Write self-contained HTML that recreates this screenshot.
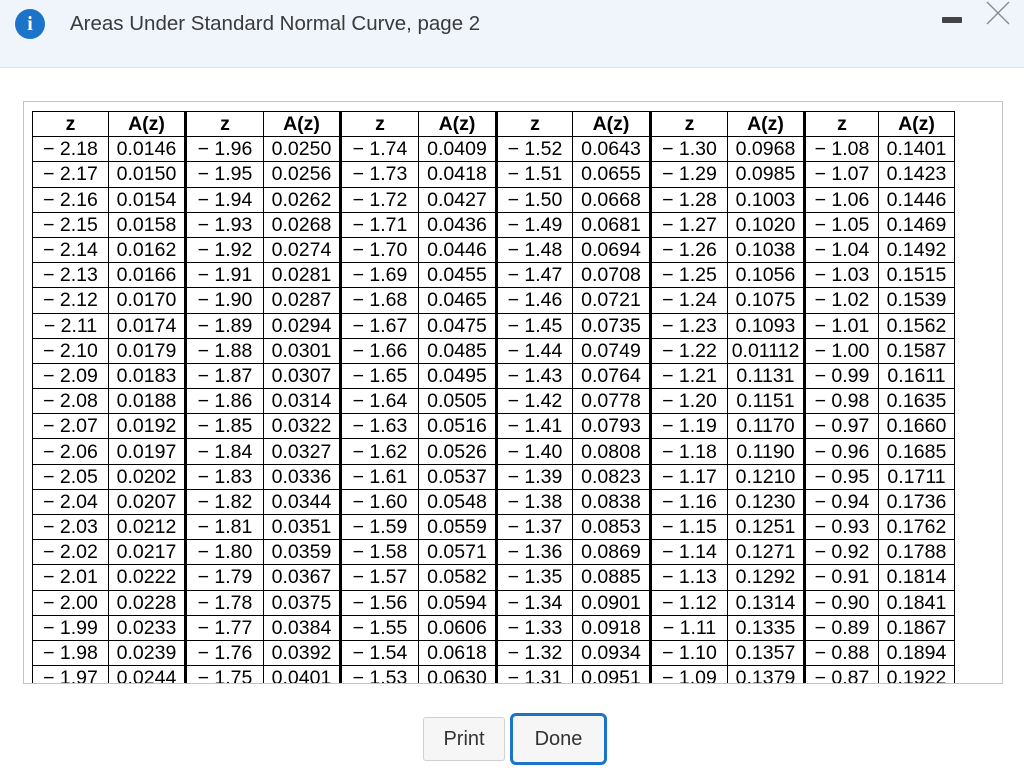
<!DOCTYPE html>
<html><head><meta charset="utf-8"><style>
body{margin:0;width:1024px;height:782px;background:#fff;position:relative;overflow:hidden;font-family:"Liberation Sans",Arial,sans-serif}
.hdr{position:absolute;left:0;top:0;width:1024px;height:67px;background:#f0f5fc;border-bottom:1px solid #d3e4f6}
.title{position:absolute;left:70px;top:12px;font-size:20.5px;color:#3a3a3a}
.info{position:absolute;left:15px;top:9px;width:30px;height:30px;border-radius:50%;background:#1b74c9;color:#fff;font:bold 20px "Liberation Serif",serif;text-align:center;line-height:30px}
.min{position:absolute;left:942px;top:17px;width:20px;height:6px;background:#444;border-radius:1px}
.frame{position:absolute;left:23px;top:101px;width:978px;height:581px;border:1px solid #c4c4c4;overflow:hidden}
table{position:absolute;left:8px;top:9px;border-collapse:collapse;table-layout:fixed;font-size:19.5px;color:#000}
td{border:1px solid #000;height:24.2px;padding:0;text-align:center;line-height:22px;white-space:nowrap;overflow:hidden}
tr:first-child td{font-weight:bold}
td.t{border-left:3px solid #000}
.btn{position:absolute;font-size:19px;color:#333;text-align:center;box-sizing:border-box;background:#f6f6f6}
</style></head><body>
<div class="hdr">
<div class="info">i</div>
<div class="title">Areas Under Standard Normal Curve, page 2</div>
<div class="min"></div>
<svg style="position:absolute;left:986px;top:1px" width="24" height="24"><path d="M1 1L23 23M23 1L1 23" stroke="#888" stroke-width="1.3"/></svg>
</div>
<div class="frame">
<table>
<colgroup><col style="width:76px"><col style="width:77px"><col style="width:78px"><col style="width:77px"><col style="width:78px"><col style="width:78px"><col style="width:76px"><col style="width:78px"><col style="width:77px"><col style="width:77px"><col style="width:74px"><col style="width:76px"></colgroup>
<tr><td>z</td><td>A(z)</td><td class="t">z</td><td>A(z)</td><td class="t">z</td><td>A(z)</td><td class="t">z</td><td>A(z)</td><td class="t">z</td><td>A(z)</td><td class="t">z</td><td>A(z)</td></tr>
<tr><td>− 2.18</td><td>0.0146</td><td class="t">− 1.96</td><td>0.0250</td><td class="t">− 1.74</td><td>0.0409</td><td class="t">− 1.52</td><td>0.0643</td><td class="t">− 1.30</td><td>0.0968</td><td class="t">− 1.08</td><td>0.1401</td></tr>
<tr><td>− 2.17</td><td>0.0150</td><td class="t">− 1.95</td><td>0.0256</td><td class="t">− 1.73</td><td>0.0418</td><td class="t">− 1.51</td><td>0.0655</td><td class="t">− 1.29</td><td>0.0985</td><td class="t">− 1.07</td><td>0.1423</td></tr>
<tr><td>− 2.16</td><td>0.0154</td><td class="t">− 1.94</td><td>0.0262</td><td class="t">− 1.72</td><td>0.0427</td><td class="t">− 1.50</td><td>0.0668</td><td class="t">− 1.28</td><td>0.1003</td><td class="t">− 1.06</td><td>0.1446</td></tr>
<tr><td>− 2.15</td><td>0.0158</td><td class="t">− 1.93</td><td>0.0268</td><td class="t">− 1.71</td><td>0.0436</td><td class="t">− 1.49</td><td>0.0681</td><td class="t">− 1.27</td><td>0.1020</td><td class="t">− 1.05</td><td>0.1469</td></tr>
<tr><td>− 2.14</td><td>0.0162</td><td class="t">− 1.92</td><td>0.0274</td><td class="t">− 1.70</td><td>0.0446</td><td class="t">− 1.48</td><td>0.0694</td><td class="t">− 1.26</td><td>0.1038</td><td class="t">− 1.04</td><td>0.1492</td></tr>
<tr><td>− 2.13</td><td>0.0166</td><td class="t">− 1.91</td><td>0.0281</td><td class="t">− 1.69</td><td>0.0455</td><td class="t">− 1.47</td><td>0.0708</td><td class="t">− 1.25</td><td>0.1056</td><td class="t">− 1.03</td><td>0.1515</td></tr>
<tr><td>− 2.12</td><td>0.0170</td><td class="t">− 1.90</td><td>0.0287</td><td class="t">− 1.68</td><td>0.0465</td><td class="t">− 1.46</td><td>0.0721</td><td class="t">− 1.24</td><td>0.1075</td><td class="t">− 1.02</td><td>0.1539</td></tr>
<tr><td>− 2.11</td><td>0.0174</td><td class="t">− 1.89</td><td>0.0294</td><td class="t">− 1.67</td><td>0.0475</td><td class="t">− 1.45</td><td>0.0735</td><td class="t">− 1.23</td><td>0.1093</td><td class="t">− 1.01</td><td>0.1562</td></tr>
<tr><td>− 2.10</td><td>0.0179</td><td class="t">− 1.88</td><td>0.0301</td><td class="t">− 1.66</td><td>0.0485</td><td class="t">− 1.44</td><td>0.0749</td><td class="t">− 1.22</td><td>0.01112</td><td class="t">− 1.00</td><td>0.1587</td></tr>
<tr><td>− 2.09</td><td>0.0183</td><td class="t">− 1.87</td><td>0.0307</td><td class="t">− 1.65</td><td>0.0495</td><td class="t">− 1.43</td><td>0.0764</td><td class="t">− 1.21</td><td>0.1131</td><td class="t">− 0.99</td><td>0.1611</td></tr>
<tr><td>− 2.08</td><td>0.0188</td><td class="t">− 1.86</td><td>0.0314</td><td class="t">− 1.64</td><td>0.0505</td><td class="t">− 1.42</td><td>0.0778</td><td class="t">− 1.20</td><td>0.1151</td><td class="t">− 0.98</td><td>0.1635</td></tr>
<tr><td>− 2.07</td><td>0.0192</td><td class="t">− 1.85</td><td>0.0322</td><td class="t">− 1.63</td><td>0.0516</td><td class="t">− 1.41</td><td>0.0793</td><td class="t">− 1.19</td><td>0.1170</td><td class="t">− 0.97</td><td>0.1660</td></tr>
<tr><td>− 2.06</td><td>0.0197</td><td class="t">− 1.84</td><td>0.0327</td><td class="t">− 1.62</td><td>0.0526</td><td class="t">− 1.40</td><td>0.0808</td><td class="t">− 1.18</td><td>0.1190</td><td class="t">− 0.96</td><td>0.1685</td></tr>
<tr><td>− 2.05</td><td>0.0202</td><td class="t">− 1.83</td><td>0.0336</td><td class="t">− 1.61</td><td>0.0537</td><td class="t">− 1.39</td><td>0.0823</td><td class="t">− 1.17</td><td>0.1210</td><td class="t">− 0.95</td><td>0.1711</td></tr>
<tr><td>− 2.04</td><td>0.0207</td><td class="t">− 1.82</td><td>0.0344</td><td class="t">− 1.60</td><td>0.0548</td><td class="t">− 1.38</td><td>0.0838</td><td class="t">− 1.16</td><td>0.1230</td><td class="t">− 0.94</td><td>0.1736</td></tr>
<tr><td>− 2.03</td><td>0.0212</td><td class="t">− 1.81</td><td>0.0351</td><td class="t">− 1.59</td><td>0.0559</td><td class="t">− 1.37</td><td>0.0853</td><td class="t">− 1.15</td><td>0.1251</td><td class="t">− 0.93</td><td>0.1762</td></tr>
<tr><td>− 2.02</td><td>0.0217</td><td class="t">− 1.80</td><td>0.0359</td><td class="t">− 1.58</td><td>0.0571</td><td class="t">− 1.36</td><td>0.0869</td><td class="t">− 1.14</td><td>0.1271</td><td class="t">− 0.92</td><td>0.1788</td></tr>
<tr><td>− 2.01</td><td>0.0222</td><td class="t">− 1.79</td><td>0.0367</td><td class="t">− 1.57</td><td>0.0582</td><td class="t">− 1.35</td><td>0.0885</td><td class="t">− 1.13</td><td>0.1292</td><td class="t">− 0.91</td><td>0.1814</td></tr>
<tr><td>− 2.00</td><td>0.0228</td><td class="t">− 1.78</td><td>0.0375</td><td class="t">− 1.56</td><td>0.0594</td><td class="t">− 1.34</td><td>0.0901</td><td class="t">− 1.12</td><td>0.1314</td><td class="t">− 0.90</td><td>0.1841</td></tr>
<tr><td>− 1.99</td><td>0.0233</td><td class="t">− 1.77</td><td>0.0384</td><td class="t">− 1.55</td><td>0.0606</td><td class="t">− 1.33</td><td>0.0918</td><td class="t">− 1.11</td><td>0.1335</td><td class="t">− 0.89</td><td>0.1867</td></tr>
<tr><td>− 1.98</td><td>0.0239</td><td class="t">− 1.76</td><td>0.0392</td><td class="t">− 1.54</td><td>0.0618</td><td class="t">− 1.32</td><td>0.0934</td><td class="t">− 1.10</td><td>0.1357</td><td class="t">− 0.88</td><td>0.1894</td></tr>
<tr><td>− 1.97</td><td>0.0244</td><td class="t">− 1.75</td><td>0.0401</td><td class="t">− 1.53</td><td>0.0630</td><td class="t">− 1.31</td><td>0.0951</td><td class="t">− 1.09</td><td>0.1379</td><td class="t">− 0.87</td><td>0.1922</td></tr>
</table>
</div>
<div class="btn" style="left:423px;top:717px;width:82px;height:44px;border:1px solid #d0d0d0;border-radius:3px;line-height:42px;font-size:20px">Print</div>
<div class="btn" style="left:510px;top:713px;width:97px;height:52px;border:3px solid #1b74c9;border-radius:6px;line-height:46px;font-size:20px">Done</div>
</body></html>
